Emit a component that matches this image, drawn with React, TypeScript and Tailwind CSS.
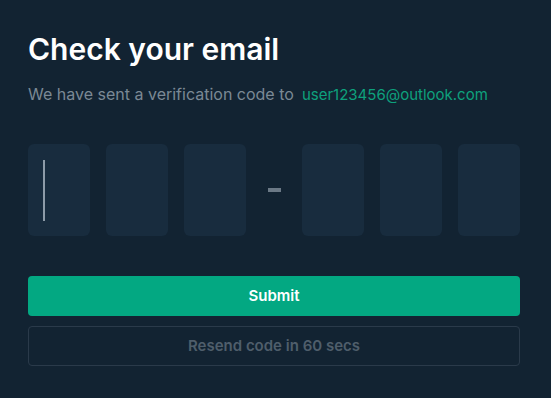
import React from 'react';

const slots = [0, 1, 2, null, 3, 4, 5];

export default function App() {
  return (
    <div className="min-h-[398px] w-[551px] bg-[#122332] font-['Inter',sans-serif]">
      <div className="flex w-[492px] flex-col pl-7 pt-[31px] box-content">
        <h1 className="text-3xl font-semibold leading-9 text-white">Check your email</h1>
        <p className="mt-[15px] text-base leading-6 text-[#7b8995]">
          We have sent a verification code to
          <span className="ml-2 text-[15px] leading-none text-[#0ea17d]">user123456@outlook.com</span>
        </p>

        {/* Code inputs */}
        <div className="mt-[38px] flex items-center justify-between">
          {slots.map((slot, idx) =>
            slot === null ? (
              <div key={idx} className="flex w-6 justify-center">
                <div className="h-[4px] w-[13px] bg-[#6b7986]" />
              </div>
            ) : (
              <div
                key={idx}
                className="flex h-[92px] w-[62px] items-center rounded-md bg-[#182c3e] pl-[15px]"
              >
                {slot === 0 && <div className="h-[61px] w-[2px] bg-[#8d9ba8]" />}
              </div>
            )
          )}
        </div>

        <button className="mt-10 h-10 w-full rounded-[4px] bg-[#03a882] text-[15px] font-semibold text-white">
          Submit
        </button>
        <button className="mt-[10px] h-10 w-full rounded-[4px] border border-[#2a3a4a] text-[15px] font-semibold text-[#4f5e6b]">
          Resend code in 60 secs
        </button>
      </div>
    </div>
  );
}
